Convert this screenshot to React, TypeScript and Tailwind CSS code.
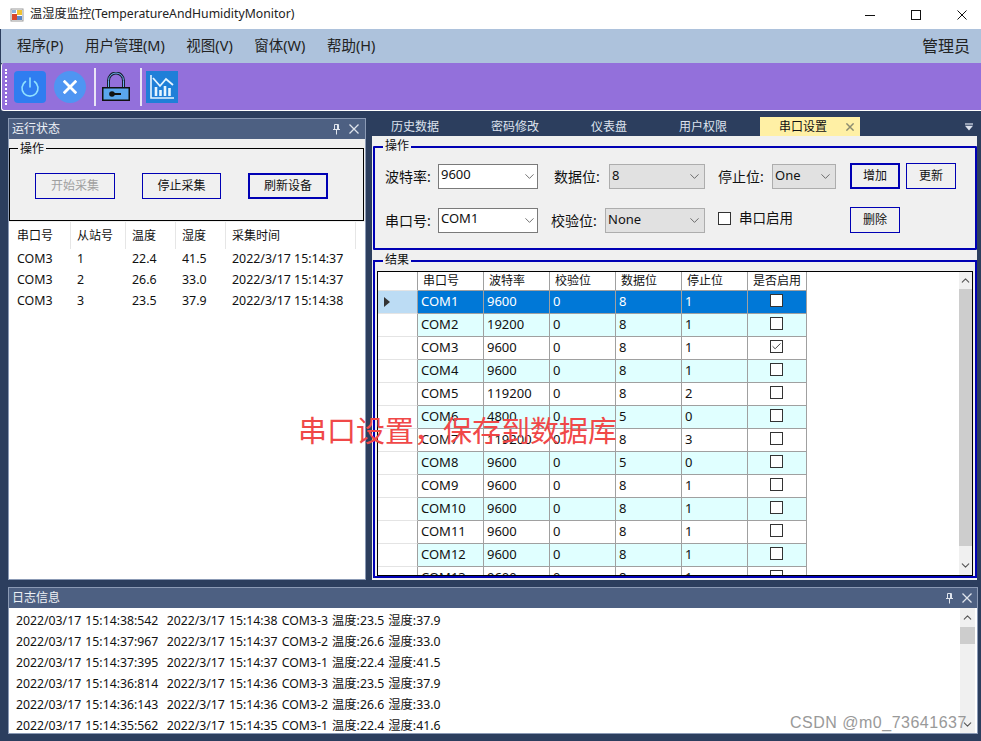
import React from 'react';
import { ChevronDown, ChevronUp, Check } from 'lucide-react';

const menuItems = ['程序(P)', '用户管理(M)', '视图(V)', '窗体(W)', '帮助(H)'];
const tabs = ['历史数据', '密码修改', '仪表盘', '用户权限'];

const statusRows = [
  ['COM3', '1', '22.4', '41.5', '2022/3/17 15:14:37'],
  ['COM3', '2', '26.6', '33.0', '2022/3/17 15:14:37'],
  ['COM3', '3', '23.5', '37.9', '2022/3/17 15:14:38'],
];

const portRows = [
  ['COM1', '9600', '0', '8', '1'],
  ['COM2', '19200', '0', '8', '1'],
  ['COM3', '9600', '0', '8', '1'],
  ['COM4', '9600', '0', '8', '1'],
  ['COM5', '119200', '0', '8', '2'],
  ['COM6', '4800', '0', '5', '0'],
  ['COM7', '119200', '0', '8', '3'],
  ['COM8', '9600', '0', '5', '0'],
  ['COM9', '9600', '0', '8', '1'],
  ['COM10', '9600', '0', '8', '1'],
  ['COM11', '9600', '0', '8', '1'],
  ['COM12', '9600', '0', '8', '1'],
  ['COM13', '9600', '0', '8', '1'],
];

const logLines = [
  '2022/03/17 15:14:38:542  2022/3/17 15:14:38 COM3-3 温度:23.5 湿度:37.9',
  '2022/03/17 15:14:37:967  2022/3/17 15:14:37 COM3-2 温度:26.6 湿度:33.0',
  '2022/03/17 15:14:37:395  2022/3/17 15:14:37 COM3-1 温度:22.4 湿度:41.5',
  '2022/03/17 15:14:36:814  2022/3/17 15:14:36 COM3-3 温度:23.5 湿度:37.9',
  '2022/03/17 15:14:36:143  2022/3/17 15:14:36 COM3-2 温度:26.6 湿度:33.0',
  '2022/03/17 15:14:35:562  2022/3/17 15:14:35 COM3-1 温度:22.4 湿度:41.6',
];

const Cross: React.FC<{ size: number; width?: number; className?: string }> = ({ size, width = 1.3, className }) => (
  <svg width={size} height={size} viewBox="0 0 10 10" fill="none" stroke="currentColor" strokeWidth={width} className={className}>
    <path d="M0.5 0.5l9 9M9.5 0.5l-9 9" />
  </svg>
);

const PanelTitle: React.FC<{ title: string; pr: string }> = ({ title, pr }) => (
  <div className={`flex h-[20px] shrink-0 items-center justify-between bg-[#4d6082] pl-[3px] text-[12px] text-[#eef1f6] ${pr}`}>
    <span>{title}</span>
    <div className="flex items-center gap-[8px] text-[#dfe4ec]">
      <svg width="9" height="12" viewBox="0 0 9 12" fill="none" stroke="currentColor" strokeWidth="1">
        <path d="M2.5 1.5h4v5h-4zM5.5 1.5v5M1 6.5h7M4.5 6.5v5" />
      </svg>
      <Cross size={10} />
    </div>
  </div>
);

const Combo: React.FC<{ value: string; w: string; gray?: boolean }> = ({ value, w, gray }) => (
  <div
    className={`flex h-[25px] items-center justify-between border pl-[2px] text-[13px] ${w} ${
      gray ? 'border-[#adadad] bg-[#e1e1e1] pr-[2px]' : 'border-[#7a7a7a] bg-white'
    }`}
  >
    <span className={`text-[#111] ${gray ? '' : 'mt-[-2px]'}`}>{value}</span>
    <ChevronDown size={15} strokeWidth={1.1} className="text-[#333]" />
  </div>
);

const Btn: React.FC<{ label: string; thick?: boolean; disabled?: boolean; className?: string }> = ({
  label,
  thick,
  disabled,
  className,
}) => (
  <div
    className={`flex items-center justify-center text-[12px] ${
      thick ? 'border-2 border-[#0000b4]' : 'border border-[#0000b4]'
    } ${disabled ? 'text-[#a0a0a0]' : 'text-[#111]'} ${className}`}
  >
    {label}
  </div>
);

const Legend: React.FC<{ text: string; className: string }> = ({ text, className }) => (
  <span className={`absolute bg-[#f0f0f0] px-[2px] text-[12px] leading-[14px] text-[#111] ${className}`}>{text}</span>
);

const App: React.FC = () => {
  return (
    <div
      className="relative h-[741px] w-[981px] overflow-hidden bg-[#2c3e5e] text-[#111]"
      style={{ fontFamily: '"Noto Sans", "Noto Sans CJK SC", sans-serif' }}
    >
      {/* title bar */}
      <div className="flex h-[29px] items-center bg-white pl-[10px] text-[12.25px]">
        <svg width="14" height="14" viewBox="0 0 14 14">
          <rect x="1" y="1" width="12" height="12" fill="#fff" stroke="#9a9a9a" />
          <rect x="2" y="6" width="5" height="6" fill="#d9482c" />
          <rect x="7" y="2" width="5" height="5" fill="#f1c232" />
          <rect x="7" y="8" width="5" height="4" fill="#5b86c8" />
          <rect x="2" y="2" width="4" height="3" fill="#8fb4dc" />
        </svg>
        <span className="ml-[6px] text-[#222]">温湿度监控(TemperatureAndHumidityMonitor)</span>
        <div className="ml-auto flex items-center text-[#111]">
          <svg width="10" height="10" viewBox="0 0 10 10" stroke="currentColor" className="mr-[36px]">
            <path d="M0 5.5h10" />
          </svg>
          <svg width="10" height="10" viewBox="0 0 10 10" fill="none" stroke="currentColor" className="mr-[36px]">
            <rect x="0.5" y="0.5" width="9" height="9" />
          </svg>
          <Cross size={10} width={1} className="mr-[14px]" />
        </div>
      </div>

      {/* menu */}
      <div className="ml-[1px] flex h-[34px] items-center bg-[#adc2dc] pl-[16px] pr-[11px] text-[14.5px] text-[#222]">
        <div className="flex gap-[21.5px]">
          {menuItems.map(m => (
            <span key={m}>{m}</span>
          ))}
        </div>
        <span className="ml-auto text-[16px]">管理员</span>
      </div>

      {/* toolbar */}
      <div className="ml-[1px] flex h-[48px] items-center rounded-l-[3px] border-b border-l border-white bg-[#9370db] pl-[3px]">
        <div className="h-[36px] w-[3px] border-l-2 border-dotted border-white" />
        <div className="ml-[6px] flex h-[32px] w-[32px] items-center justify-center rounded-[4px] bg-[#2f7df0]">
          <svg width="20" height="22" viewBox="0 0 20 22" fill="none" stroke="#8fe0ff" strokeWidth="1.6" strokeLinecap="round">
            <path d="M10 2v9M5.5 5.5a8 8 0 1 0 9 0" />
          </svg>
        </div>
        <div className="ml-[8px] flex h-[32px] w-[32px] items-center justify-center rounded-full bg-[#4f95f2]">
          <Cross size={14} width={2} className="text-white" />
        </div>
        <div className="ml-[8px] h-[38px] w-[2px] bg-[#e8e4f6]" />
        <svg width="28" height="30" viewBox="0 0 28 30" className="ml-[6px]">
          <path d="M6.5 16V8.5a7.5 7.5 0 0 1 15 0V16" fill="none" stroke="#1a2030" strokeWidth="3" />
          <path d="M6.5 16V8.5a7.5 7.5 0 0 1 15 0V16" fill="none" stroke="#6aaef0" strokeWidth="1" />
          <rect x="0.75" y="15.75" width="26.5" height="12.5" fill="#5aa7ee" stroke="#111" strokeWidth="1.5" />
          <circle cx="10" cy="22" r="2.8" fill="#111" />
          <rect x="10" y="21" width="9" height="2" fill="#111" />
        </svg>
        <div className="ml-[10px] h-[38px] w-[2px] bg-[#e8e4f6]" />
        <div className="ml-[4px] flex h-[32px] w-[32px] items-center justify-center bg-[#1f7fd8]">
          <svg width="28" height="28" viewBox="0 0 28 28" fill="none" stroke="#e6f5ff">
            <path d="M3 2v23h23" strokeWidth="1.6" />
            <path d="M5 5l7 8 6-7 7 6" strokeWidth="1.8" />
            <path d="M8 23v-9M12.5 23v-6M17 23v-10M21.5 23v-8" strokeWidth="2.6" />
          </svg>
        </div>
      </div>

      {/* docking area */}
      <div className="flex pl-[8px]">
        {/* left panel */}
        <div className="mt-[7px] flex h-[462px] w-[358px] flex-col border border-[#8b9ab5] bg-white">
          <PanelTitle title="运行状态" pr="pr-[6px]" />
          <div className="relative h-[83px] shrink-0 bg-[#f0f0f0] pt-[9px]">
            <div className="mr-[1px] flex h-[73px] border border-black px-[25px] pt-[24px]">
              <Btn label="开始采集" disabled className="h-[26px] w-[80px]" />
              <Btn label="停止采集" className="ml-[27px] h-[26px] w-[79px]" />
              <Btn label="刷新设备" thick className="ml-[27px] h-[26px] w-[80px]" />
            </div>
            <Legend text="操作" className="left-[9px] top-[3px]" />
          </div>
          <div className="flex h-[27px] items-center text-[12px]">
            {['串口号', '从站号', '温度', '湿度', '采集时间'].map((h, i) => (
              <div
                key={h}
                className={`flex h-full items-center border-r border-[#e6e6e6] ${
                  ['w-[62px] pl-[8px]', 'w-[55px] pl-[6px]', 'w-[50px] pl-[6px]', 'w-[50px] pl-[6px]', 'w-[130px] pl-[6px]'][i]
                }`}
              >
                {h}
              </div>
            ))}
          </div>
          <div className="text-[12.4px]">
            {statusRows.map(r => (
              <div key={r[4] + r[1]} className="flex h-[21px] items-center">
                <div className="w-[62px] pl-[8px]">{r[0]}</div>
                <div className="w-[55px] pl-[6px]">{r[1]}</div>
                <div className="w-[50px] pl-[6px]">{r[2]}</div>
                <div className="w-[50px] pl-[6px]">{r[3]}</div>
                <div className="pl-[6px]">{r[4]}</div>
              </div>
            ))}
          </div>
        </div>

        {/* right panel */}
        <div className="ml-[6px] flex w-[605px] flex-col">
          <div className="flex h-[25px] items-end pl-[2px] text-[12px] text-[#dde3ee]">
            {tabs.map((t, i) => (
              <div
                key={t}
                className={`flex h-[18px] items-center ${
                  ['ml-[17px] w-[100px]', 'w-[100px]', 'w-[88px]', 'w-[81px]'][i]
                }`}
              >
                {t}
              </div>
            ))}
            <div className="flex h-[19px] w-[100px] items-center bg-[#fff0a5] pl-[19px] text-[#111]">
              串口设置
              <Cross size={8} width={1.8} className="ml-[19px] text-[#8c8c70]" />
            </div>
            <svg width="8" height="8" viewBox="0 0 10 9" className="mb-[5px] ml-[105px]" fill="#dde3ee">
              <rect x="0" y="0" width="10" height="1.5" />
              <path d="M0 3h10L5 9z" />
            </svg>
          </div>
          <div className="h-[444px] bg-[#f0f0f0] pl-[1px] pt-[10px]">
            <div className="relative h-[104px] rounded-[1px] border-2 border-[#0000b4]">
              <Legend text="操作" className="left-[8px] top-[-9px]" />
              <div className="flex items-center pl-[10px] pt-[15px] text-[14px]">
                <span className="w-[53px]">波特率:</span>
                <Combo value="9600" w="w-[100px]" />
                <span className="ml-[16px] w-[55px]">数据位:</span>
                <Combo value="8" w="w-[96px]" gray />
                <span className="ml-[13px] w-[54px]">停止位:</span>
                <Combo value="One" w="w-[64px]" gray />
                <Btn label="增加" thick className="ml-[14px] h-[26px] w-[50px]" />
                <Btn label="更新" className="ml-[6px] h-[26px] w-[50px]" />
              </div>
              <div className="flex items-center pl-[10px] pt-[18px] text-[14px]">
                <span className="w-[53px]">串口号:</span>
                <Combo value="COM1" w="w-[100px]" />
                <span className="ml-[13px] w-[54px]">校验位:</span>
                <Combo value="None" w="w-[100px]" gray />
                <span className="mb-[3px] ml-[13px] h-[13px] w-[13px] border border-[#333] bg-white" />
                <span className="mb-[3px] ml-[8px] w-[111px] text-[13.5px]">串口启用</span>
                <Btn label="删除" className="h-[26px] w-[50px]" />
              </div>
            </div>
            <div className="relative mt-[10px] h-[318px] border-2 border-[#0000b4] px-[2px] pt-[9px]">
              <Legend text="结果" className="left-[8px] top-[-9px]" />
              <div className="flex h-[305px] overflow-hidden border border-black bg-white">
                <div className="w-[581px] shrink-0 overflow-hidden">
                  <div className="flex h-[18px] text-[12px]">
                    <div className="w-[40px] border-r border-[#a0a0a0]" />
                    {['串口号', '波特率', '校验位', '数据位', '停止位'].map(h => (
                      <div key={h} className="flex w-[66px] items-center border-r border-[#a0a0a0] pl-[5px]">
                        {h}
                      </div>
                    ))}
                    <div className="flex w-[59px] items-center justify-center border-r border-[#a0a0a0]">是否启用</div>
                  </div>
                  {portRows.map((r, i) => {
                    const selected = i === 0;
                    const cellBg = selected ? 'bg-[#0078d7] text-white' : i % 2 === 1 ? 'bg-[#e0ffff]' : 'bg-white';
                    return (
                      <div key={r[0]} className="flex h-[23px] text-[13px]">
                        <div
                          className={`flex w-[40px] items-center border-r border-t border-r-[#a0a0a0] border-t-[#e4e4e4] pl-[6px] ${
                            selected ? 'bg-[#bcdcf4]' : 'bg-white'
                          }`}
                        >
                          {selected && (
                            <svg width="6" height="10" viewBox="0 0 6 10" fill="#333">
                              <path d="M0 0l6 5-6 5z" />
                            </svg>
                          )}
                        </div>
                        {r.map((c, j) => (
                          <div
                            key={j}
                            className={`flex w-[66px] items-center border-r border-t border-[#a0a0a0] pl-[3px] ${cellBg}`}
                          >
                            {c}
                          </div>
                        ))}
                        <div
                          className={`flex w-[59px] items-center justify-center border-r border-t border-[#a0a0a0] ${cellBg}`}
                        >
                          <span className="mr-[2px] mt-[-3px] flex h-[13px] w-[13px] items-center justify-center border border-[#333] bg-white">
                            {i === 2 && <Check size={11} strokeWidth={2} className="text-[#333]" />}
                          </span>
                        </div>
                      </div>
                    );
                  })}
                </div>
                <div className="ml-auto mr-[1px] flex w-[15px] flex-col items-center bg-[#f0f0f0]">
                  <ChevronUp size={13} strokeWidth={2} className="my-[2px] text-[#555]" />
                  <div className="h-[257px] w-full bg-[#cdcdcd]" />
                  <ChevronDown size={13} strokeWidth={2} className="mt-[13px] text-[#555]" />
                </div>
              </div>
            </div>
          </div>
        </div>
      </div>

      {/* log panel */}
      <div className="ml-[8px] mt-[7px] flex h-[147px] w-[970px] flex-col border border-[#8b9ab5] bg-white">
        <PanelTitle title="日志信息" pr="pr-[5px]" />
        <div className="flex min-h-0 flex-1">
          <div className="flex-1 overflow-hidden pl-[7px] pt-[2px] text-[12.25px] [word-spacing:1px]">
            {logLines.map(l => (
              <div key={l} className="h-[21px] whitespace-pre leading-[21px]">
                {l}
              </div>
            ))}
          </div>
          <div className="mr-[2px] flex w-[15px] flex-col items-center bg-[#f0f0f0]">
            <ChevronUp size={13} strokeWidth={2} className="my-[3px] text-[#555]" />
            <div className="h-[17px] w-full bg-[#cdcdcd]" />
            <ChevronDown size={13} strokeWidth={2} className="mb-[2px] mt-auto text-[#555]" />
          </div>
        </div>
      </div>

      {/* screenshot annotation and watermark */}
      <span className="absolute left-[298px] top-[410px] whitespace-nowrap text-[29px] leading-[42px] text-[#f04848]">
        串口设置，保存到数据库
      </span>
      <span
        className="absolute left-[790px] top-[713px] whitespace-nowrap text-[16px] leading-[20px] tracking-[0.5px] text-[#999]"
        style={{ fontFamily: '"Liberation Sans", sans-serif' }}
      >
        CSDN @m0_73641637
      </span>
    </div>
  );
};

export default App;
